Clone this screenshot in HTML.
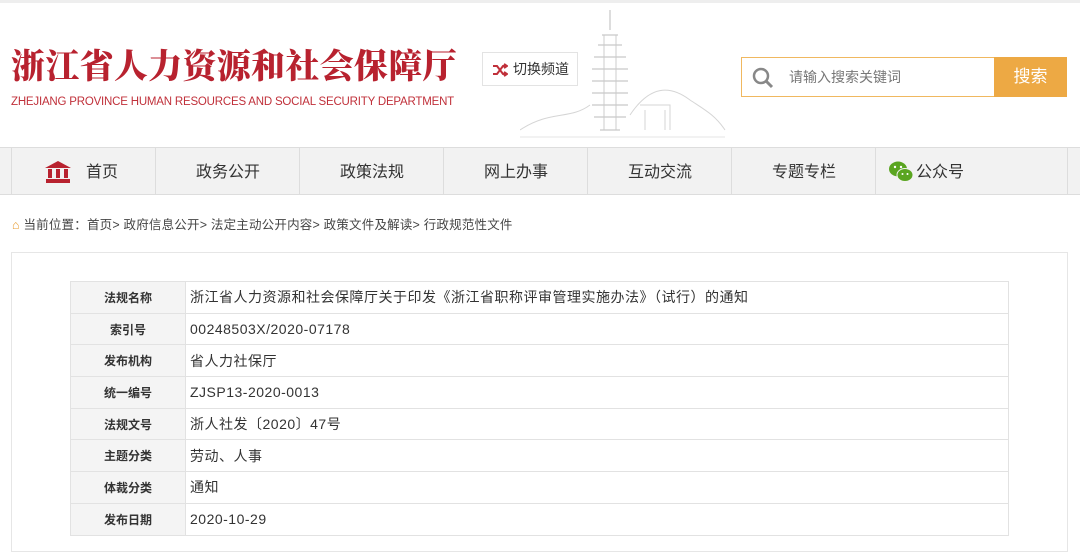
<!DOCTYPE html>
<html><head><meta charset="utf-8"><style>
*{margin:0;padding:0;box-sizing:border-box}
body{width:1080px;height:539px;overflow:hidden;background:#fff;font-family:"Liberation Sans","Noto Sans CJK SC",sans-serif;color:#333;position:relative}
.topbar{position:absolute;left:0;top:0;width:1080px;height:3px;background:#eee}
.title{position:absolute;left:11px;top:42px;font-family:"Noto Serif CJK SC",serif;font-weight:900;font-size:34px;color:#b8222f;letter-spacing:0.3px;line-height:44px;white-space:nowrap}
.en{position:absolute;left:11px;top:96px;font-size:11.5px;color:#c0303a;letter-spacing:-0.2px;white-space:nowrap}
.switch{position:absolute;left:482px;top:52px;width:96px;height:34px;border:1px solid #e3e3e3;font-size:14px;line-height:32px;padding-left:30px;color:#333}
.switch svg{position:absolute;left:9px;top:10px}
.search{position:absolute;left:741px;top:57px;width:254px;height:40px;border:1px solid #f0b860}
.search .ph{position:absolute;left:47px;top:9px;font-size:14px;color:#777}
.btn{position:absolute;left:994px;top:57px;width:73px;height:40px;background:#eda944;color:#fff;font-size:17px;text-align:center;line-height:40px}
.nav{position:absolute;left:0;top:147px;width:1080px;height:48px;background:#f2f2f2;border-top:1px solid #ddd;border-bottom:1px solid #ddd}
.nav div{position:absolute;top:0;height:46px;line-height:50px;text-align:center;font-size:16px;color:#333;border-left:1px solid #ddd;width:145px}
.crumb{position:absolute;left:12px;top:214px;font-size:12.5px;color:#444;letter-spacing:0.2px}
.box{position:absolute;left:11px;top:252px;width:1057px;height:300px;border:1px solid #e6e6e6}
table{position:absolute;left:70px;top:281px;width:939px;border-collapse:collapse}
td{border:1px solid #e2e2e2;height:31.7px;font-size:14px;padding:0 0 0 4px;color:#333;letter-spacing:0.5px}
td.l{width:115px;background:#f4f4f4;text-align:center;font-weight:bold;font-size:12px;padding:0;letter-spacing:0}
</style></head><body>
<div class="topbar"></div>
<div class="title">浙江省人力资源和社会保障厅</div>
<div class="en">ZHEJIANG PROVINCE HUMAN RESOURCES AND SOCIAL SECURITY DEPARTMENT</div>
<div class="switch"><svg width="16" height="14" viewBox="0 0 16 14"><path d="M1 3h4l6 8h4M1 11h4l6-8h4M12 1l3 2-3 2M12 9l3 2-3 2" stroke="#c0303a" stroke-width="2" fill="none"/></svg>切换频道</div>
<svg style="position:absolute;left:520px;top:5px" width="210" height="140" viewBox="0 0 210 140" fill="none" stroke="#bbb" stroke-width="1">
<path d="M90 5v20M82 30h16M78 40h24M74 52h32M72 64h36M72 76h36M72 88h36M72 100h36M74 112h32M80 125h20"/>
<path d="M84 30v95M96 30v95" stroke="#ccc"/>
<path d="M0 125c30-20 50-10 70-25M110 110c20-30 40-30 60-15 15 10 25 15 35 30M120 100h30v25M125 105v20M145 105v20" stroke="#d5d5d5"/>
<path d="M0 132h205" stroke="#e5e5e5"/>
</svg>
<div class="search"><svg style="position:absolute;left:10px;top:9px" width="22" height="22" viewBox="0 0 22 22"><circle cx="9" cy="9" r="7" stroke="#888" stroke-width="2.5" fill="none"/><path d="M14 14l6 6" stroke="#888" stroke-width="3"/></svg><span class="ph">请输入搜索关键词</span></div>
<div class="btn">搜索</div>
<div class="nav">
<div style="left:11px"><svg style="position:absolute;left:33px;top:13px" width="26" height="22" viewBox="0 0 26 22"><path d="M13 0L0 7h26z" fill="#b8222f"/><rect x="3" y="8" width="4" height="9" fill="#b8222f"/><rect x="11" y="8" width="4" height="9" fill="#b8222f"/><rect x="19" y="8" width="4" height="9" fill="#b8222f"/><rect x="1" y="18" width="24" height="4" fill="#b8222f"/></svg><span style="position:relative;left:18px">首页</span></div>
<div style="left:155px">政务公开</div>
<div style="left:299px">政策法规</div>
<div style="left:443px">网上办事</div>
<div style="left:587px">互动交流</div>
<div style="left:731px">专题专栏</div>
<div style="left:875px;width:192px;text-align:left;padding-left:40px"><svg style="position:absolute;left:12px;top:13px" width="26" height="22" viewBox="0 0 26 22"><ellipse cx="10" cy="8" rx="9" ry="7.5" fill="#5aa520"/><ellipse cx="17" cy="14" rx="8" ry="6.5" fill="#5aa520" stroke="#f2f2f2" stroke-width="1"/><circle cx="7" cy="6" r="1.2" fill="#fff"/><circle cx="13" cy="6" r="1.2" fill="#fff"/><circle cx="14.5" cy="13" r="1" fill="#fff"/><circle cx="19.5" cy="13" r="1" fill="#fff"/></svg>公众号</div>
<div style="left:1067px;width:13px"></div>
</div>
<div class="crumb"><span style="color:#e89a2c">⌂</span> 当前位置：首页&gt; 政府信息公开&gt; 法定主动公开内容&gt; 政策文件及解读&gt; 行政规范性文件</div>
<div class="box"></div>
<table>
<tr><td class="l">法规名称</td><td>浙江省人力资源和社会保障厅关于印发《浙江省职称评审管理实施办法》（试行）的通知</td></tr>
<tr><td class="l">索引号</td><td>00248503X/2020-07178</td></tr>
<tr><td class="l">发布机构</td><td>省人力社保厅</td></tr>
<tr><td class="l">统一编号</td><td>ZJSP13-2020-0013</td></tr>
<tr><td class="l">法规文号</td><td>浙人社发〔2020〕47号</td></tr>
<tr><td class="l">主题分类</td><td>劳动、人事</td></tr>
<tr><td class="l">体裁分类</td><td>通知</td></tr>
<tr><td class="l">发布日期</td><td>2020-10-29</td></tr>
</table>
</body></html>
